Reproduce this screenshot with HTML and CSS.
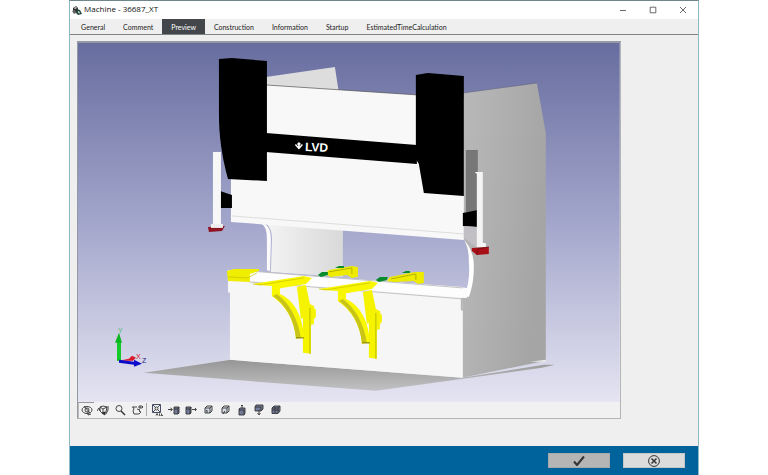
FILE: index.html
```html
<!DOCTYPE html>
<html lang="en">
<head>
    <meta charset="UTF-8">
    <meta name="viewport" content="width=device-width, initial-scale=1.0">
    <title>Machine - 36687_XT</title>
    <link rel="stylesheet" href="styles.css">
</head>
<body>
<div class="window">
    <header class="titlebar">
        <svg class="app-icon" viewBox="0 0 10 10">
            <path d="M1 3l3-2 2 2v4l-3 1-2-2z" fill="#333"/>
            <path d="M2 3l2-1 1 1-2 1z" fill="#ddd"/>
            <path d="M0 6l3-1 1 3-2 1z" fill="#666"/>
            <path d="M5 4l3 1 2 4-4 1-2-2z" fill="#24443d"/>
            <path d="M6 6l1.5.5.5 2-2-.5z" fill="#b7d6cc"/>
        </svg>
        <h1 class="title">Machine - 36687_XT</h1>
        <div class="window-buttons">
            <button type="button" aria-label="Minimize"><svg viewBox="0 0 8 8"><path d="M1 4.5h6"/></svg></button>
            <button type="button" aria-label="Maximize"><svg viewBox="0 0 8 8"><path d="M1.2 1.2h5.6v5.6H1.2z"/></svg></button>
            <button type="button" aria-label="Close"><svg viewBox="0 0 8 8"><path d="M1 1l6 6M7 1L1 7"/></svg></button>
        </div>
    </header>

    <nav class="tabs">
        <button type="button" class="tab">General</button>
        <button type="button" class="tab">Comment</button>
        <button type="button" class="tab active">Preview</button>
        <button type="button" class="tab">Construction</button>
        <button type="button" class="tab">Information</button>
        <button type="button" class="tab">Startup</button>
        <button type="button" class="tab">EstimatedTimeCalculation</button>
    </nav>

    <main class="content">
        <div class="viewer">
            <svg class="scene" viewBox="78 43 542 359" role="img" aria-label="3D machine preview">
                <defs>
                    <linearGradient id="sky" x1="0" y1="0" x2="0" y2="1">
                        <stop offset="0" stop-color="#676d9f"/>
                        <stop offset="0.5" stop-color="#a3a6cb"/>
                        <stop offset="1" stop-color="#e5e4f2"/>
                    </linearGradient>
                    <linearGradient id="side" x1="0" y1="0" x2="1" y2="0.3">
                        <stop offset="0" stop-color="#b9b9b9"/>
                        <stop offset="1" stop-color="#a5a5a5"/>
                    </linearGradient>
                    <linearGradient id="inner" x1="0" y1="0" x2="1" y2="0">
                        <stop offset="0" stop-color="#f3f3f3"/>
                        <stop offset="1" stop-color="#d9d9d9"/>
                    </linearGradient>
                    <linearGradient id="floor" x1="0" y1="0" x2="0" y2="1">
                        <stop offset="0" stop-color="#969696"/>
                        <stop offset="1" stop-color="#c2c2c4"/>
                    </linearGradient>
                    <g id="gauge">
                        <path d="M297 287l9-2 4 19 4 2 1 4 1-1v8l-2 2v5l-3 1v29l-8-1v-35l-2 1z" fill="#f5f300"/>
                        <path d="M310 308v46" stroke="#bcb900" fill="none"/>
                        <path d="M272 286l8 2v6c14 6 23 22 24 44l-8 1c-1-19-11-34-24-43z" fill="#f8f600"/>
                        <path d="M273 296c13 9 21 23 23 42l5 0c-3-20-12-35-24-44z" fill="#c9c518"/>
                        <path d="M253 284l51-8 8 2-6 6-30 5-4-3-14-1z" fill="#f8f600"/>
                        <path d="M253 284l7 1 44-7" fill="none" stroke="#c7c300" stroke-width="0.7"/>
                        <path d="M296 338h8" stroke="#777500" fill="none"/>
                    </g>
                </defs>
                <rect x="78" y="43" width="542" height="359" fill="url(#sky)"/>

                <!-- floor shadow -->
                <path d="M144 373l87-13 231 18 82-13 11 0-13 3-166 23z" fill="url(#floor)"/>

                <!-- back wall and right side panel -->
                <path d="M266 77l69-10 4 26-73-6z" fill="#ddd"/>
                <path d="M463 93l74-10 9 50v228l-84 17v-80h5l5-30-7-28h-2z" fill="url(#side)"/>
                <path d="M463 93l74-10" stroke="#696c88" fill="none" stroke-width="0.7"/>
                <path d="M267 224h76v53l-72-5 1-33c0-8-2-11-5-15z" fill="url(#inner)"/>
                <path d="M265 224c5 4 6 8 6 17l-1 30-3-1v-30c0-8-1-13-5-16z" fill="#fbfbfb"/>
                <path d="M466 150h12v62h-12z" fill="#777"/>

                <!-- upper ram -->
                <path d="M266 85l198 13v142l-233-18v-43h35z" fill="#f8f8f8"/>
                <path d="M266 85l198 13" stroke="#555" fill="none" stroke-width="0.7"/>
                <path d="M232 216l232 18" stroke="#ddd" fill="none"/>
                <path d="M218 190l5 2 9 3v13h-14z" fill="#000"/>
                <path d="M463 213l15-3v17l-15-1z" fill="#000"/>
                <path d="M464 226l14 1v21l-14-10z" fill="#c1bfc3"/>
                <path d="M266 133l151 12v19l-151-12z" fill="#000"/>
                <path d="M219 59l13-1 35 3v120l-39-2c-6-22-9-42-9-65z" fill="#000"/>
                <path d="M416 75l12-2 36 3v120l-40-3-5-29-3-5z" fill="#000"/>

                <!-- logo -->
                <path d="M299 142l2 2-2 2-2-2z" fill="#fff"/>
                <path d="M295.500 144.500l3.500 4 3.500-4M299 145v4" stroke="#fff" stroke-width="1.400" fill="none"/>
                <text x="305" y="151" class="brand" transform="rotate(2 305 151)">LVD</text>

                <!-- side posts -->
                <path d="M213 152h8v73h-8z" fill="#f7f7f7"/>
                <path d="M208 227l17-1-3 5-13 1z" fill="#8d1420"/>
                <path d="M211 224h12v4h-12z" fill="#eee"/>
                <path d="M464 240c6 6 10 15 10 26 0 14-2 23-5 31l-4-1c4-12 5-22 4-34 0-10-1-16-5-22z" fill="#fff"/>
                <path d="M475 172h8v71h3v4h-9v-73z" fill="#f4f4f4"/>
                <path d="M472 248l17-1v7l-12 1-5-4z" fill="#a80f17"/>
                <path d="M477 255l1-6 11-2" stroke="#63070c" fill="none" stroke-width="0.7"/>

                <!-- lower bed -->
                <path d="M228 270l235 17v91l-233-18v-67l-2-1z" fill="#f6f6f6"/>
                <path d="M248 271l220 17-1 10-218-17z" fill="#fdfdfd"/>
                <path d="M248 271l215 17M249 282l214 17" stroke="#b5b5b5" fill="none" stroke-width="0.8"/>
                <path d="M463 298l-2 0v12l2 1z" fill="#b5b5b5"/>
                <path d="M530 362h16v-2z" fill="#eee"/>

                <!-- clamps and back stops -->
                <path d="M227 271l7-2 25 0v2l-9 3v8l-22-1z" fill="#f0ee00"/>
                <path d="M228 277l20 1 9-5" fill="none" stroke="#c4c100" stroke-width="0.7"/>
                <path d="M325 274l4-4 23-4 6 1v10l-6 1-5-3-16 2z" fill="#eeeb00"/>
                <path d="M329 272l23-4v6" fill="none" stroke="#a5a200" stroke-width="0.8"/>
                <path d="M387 281l3-4 25-5 9 0v11l-6 1-4-3-20 1z" fill="#eeeb00"/>
                <path d="M391 279l25-5v6" fill="none" stroke="#a5a200" stroke-width="0.8"/>
                <path d="M318 275l4-3h6v3l-7 2zM335 268l4-2h5v2zM376 280l4-3 8 0-1 3-8 2zM402 273l4-2h4v2z" fill="#078b2d"/>
                <use href="#gauge"/>
                <use href="#gauge" x="66" y="5"/>

                <!-- axis marker -->
                <path d="M119 361v-20" stroke="#14ca28" stroke-width="4"/>
                <path d="M115 343l4-10 3 10z" fill="#0db521"/>
                <path d="M119 361l10-2 3-3 4 2-3 3z" fill="#d8182b"/>
                <path d="M119 360l15 2v-2l8 4-8 3v-2l-15-2z" fill="#0b0bc9"/>
                <text x="118" y="333" class="axis axis-y">Y</text>
                <text x="136" y="359" class="axis axis-x">X</text>
                <text x="142" y="363" class="axis axis-z">Z</text>
            </svg>

            <div class="toolbar">
                <button type="button" class="tool pressed" aria-label="Rotate">
                    <svg viewBox="0 0 12 12"><ellipse cx="6" cy="6" rx="5" ry="3.500"/><circle cx="6" cy="6" r="2"/><path d="M3 2l6 7M7 8v3l3-1"/></svg>
                </button>
                <button type="button" class="tool" aria-label="Orbit">
                    <svg viewBox="0 0 12 12"><path d="M3 3l3-1 4 1-1 5-3 2-3-3zM3 3l3 2 4-2M6 5v5M0 7l2-3 1 3M11 2v4l-2 4"/><path d="M5 9l3-1v3z" fill="#222"/></svg>
                </button>
                <button type="button" class="tool" aria-label="Zoom">
                    <svg viewBox="0 0 12 12"><circle cx="5" cy="4.500" r="3"/><path d="M7 7l4 4" stroke-width="1.500"/></svg>
                </button>
                <button type="button" class="tool" aria-label="Pan">
                    <svg viewBox="0 0 12 12"><path d="M1 3h5M2 3l1 2-1 2 1 3h5l2-2-2-1 1-1-3-1M9 1v4M7 3h5M10.500 1.500L12 3l-1.500 1.500"/></svg>
                </button>
                <span class="separator"></span>
                <button type="button" class="tool" aria-label="Zoom all">
                    <svg viewBox="0 0 12 12"><path d="M1.500.5h8v8h-8zM2 1l2.500 2.500M9 1L6.500 3.500M2 8l2.500-2.500M9 8L6.500 5.500" class="navy"/><circle cx="5.500" cy="4.500" r="1.500"/><path d="M5 11.500l1-2 1 2M8.500 9.500v2h1M10.500 9.500v2H12"/></svg>
                </button>
                <button type="button" class="tool" aria-label="Left view">
                    <svg viewBox="0 0 12 12"><path d="M0 5.500h4M2.500 4l2 1.500-2 1.500"/><path d="M6 3h5v6l-1 1H6z" class="cube"/><path d="M6 5h4v5M10 5l1-2"/></svg>
                </button>
                <button type="button" class="tool" aria-label="Right view">
                    <svg viewBox="0 0 12 12"><path d="M7 5.500h4M10 4l1.500 1.500L10 7"/><path d="M1 3h5v6l-1 1H1z" class="cube"/><path d="M1 5h4v5M5 5l1-2"/></svg>
                </button>
                <button type="button" class="tool" aria-label="Front view">
                    <svg viewBox="0 0 12 12"><path d="M3 4l2-2h5v5L8 9H3z" class="light"/><path d="M3 4h5v5M8 4l2-2M5 9v-3l-1 1"/></svg>
                </button>
                <button type="button" class="tool" aria-label="Back view">
                    <svg viewBox="0 0 12 12"><path d="M3 4l2-2h5v5L8 9H3z" class="light"/><path d="M3 4h5v5M8 4l2-2M6 7l-2 3"/></svg>
                </button>
                <button type="button" class="tool" aria-label="Bottom view">
                    <svg viewBox="0 0 12 12"><path d="M3 5l1-1h5v5l-1 2H3z" class="cube"/><path d="M3 6h5v5M6 4V1M5 2l1-1 1 1"/></svg>
                </button>
                <button type="button" class="tool" aria-label="Top view">
                    <svg viewBox="0 0 12 12"><path d="M2 3l1-2h7v4L8 7H2z" class="cube"/><path d="M2 3h6v4M6 6v4M4.500 9L6 11l1.500-2"/></svg>
                </button>
                <button type="button" class="tool" aria-label="Isometric view">
                    <svg viewBox="0 0 12 12"><path d="M2 4l2-2h6v5L8 9.500H2z" class="cube"/><path d="M2 4h6v5M8 4l2-2M5 3v6M2 6h7"/></svg>
                </button>
            </div>
        </div>
    </main>

    <footer class="footer">
        <button type="button" class="action confirm" aria-label="OK">
            <svg viewBox="0 0 14 12"><path d="M2 6.500l3 3.500 7-8.500" stroke-width="2"/></svg>
        </button>
        <button type="button" class="action" aria-label="Cancel">
            <svg viewBox="0 0 14 12"><circle cx="7" cy="6" r="5.400"/><path d="M4.500 3.500l5 5M9.500 3.500l-5 5" stroke-width="1.500"/></svg>
        </button>
    </footer>
</div>
</body>
</html>
```
FILE: styles.css
```css
* {
    box-sizing: border-box;
}

body {
    margin: 0;
    padding: 0 9%;
    min-height: 100vh;
    display: flex;
    background: #fff;
    font-family: "Open Sans", "Liberation Sans", sans-serif;
}

button {
    margin: 0;
    padding: 0;
    border: none;
    background: none;
    font-family: inherit;
    cursor: pointer;
}

svg {
    display: block;
    fill: none;
    stroke-linejoin: round;
}

.window {
    flex: 1;
    display: flex;
    flex-direction: column;
    border: 1px solid #8fb8c6;
    border-top-color: #71868c;
    border-bottom: none;
    background: #efefef;
}

.titlebar {
    display: flex;
    align-items: center;
    height: 18px;
    padding: 0 0 0 2px;
    background: #fff;
}

.app-icon {
    width: 10px;
    height: 10px;
}

.title {
    flex: 1;
    margin: 0 0 0 2px;
    font-size: 8px;
    line-height: 16px;
    padding-bottom: 2px;
    font-weight: 400;
    color: #111;
}

.window-buttons {
    display: flex;
}

.window-buttons button {
    width: 30px;
    height: 18px;
    display: flex;
    justify-content: center;
    align-items: center;
}

.window-buttons svg {
    width: 8px;
    height: 8px;
    stroke: #444;
    stroke-width: 0.8;
}

/* Tabs */
.tabs {
    display: flex;
    height: 16px;
    padding-left: 2px;
    border-bottom: 1px solid #80837f;
}

.tab {
    padding: 0 9px;
    font-family: Lato, "Liberation Sans", sans-serif;
    font-size: 7px;
    line-height: 17px;
    color: #222;
}

.tab.active {
    background: #43474b;
    color: #fff;
}

/* 3D viewer */
.content {
    flex: 1;
    padding: 6px 77px 27px 7px;
}

.viewer {
    border: 1px solid #9698a3;
    border-top-width: 2px;
    border-right-color: #b5b5b5;
    border-bottom-color: #b5b5b5;
}

.scene {
    width: 100%;
    height: auto;
}

.brand {
    font-family: "Liberation Sans", Arial, sans-serif;
    font-size: 12px;
    font-weight: 700;
    fill: #fff;
}

.axis {
    font-family: "Liberation Sans", Arial, sans-serif;
    font-size: 7px;
}

.axis-x {
    fill: #d8182b;
}

.axis-y {
    fill: #4bbd72;
}

.axis-z {
    fill: #1b1b7c;
}

.toolbar {
    display: flex;
    align-items: center;
    height: 16px;
    background: #f1f1f1;
}

.tool {
    width: 17px;
    height: 16px;
    display: flex;
    justify-content: center;
    align-items: center;
}

.tool.pressed {
    width: 16px;
    border-top: 1px solid #999;
    border-left: 1px solid #bbb;
}

.tool svg {
    width: 12px;
    height: 12px;
    stroke: #333;
    stroke-width: 0.9;
}

.tool .navy {
    stroke: #333a52;
}

.tool .cube {
    fill: #737b98;
}

.tool .light {
    fill: #d5dbe4;
}

.separator {
    width: 1px;
    height: 13px;
    margin: 0 1px;
    background: #aaa;
}

/* Footer */
.footer {
    display: flex;
    justify-content: flex-end;
    gap: 13px;
    height: 29px;
    padding: 7px 13px;
    background: #00639b;
}

.action {
    width: 62px;
    height: 15px;
    display: flex;
    justify-content: center;
    align-items: center;
    background: #dcdcdc;
    border: 1px solid #c6c6c6;
}

.action.confirm {
    background: #b5b5b5;
    border-color: #a8a8a8;
}

.action svg {
    width: 14px;
    height: 12px;
    stroke: #333;
}
```
